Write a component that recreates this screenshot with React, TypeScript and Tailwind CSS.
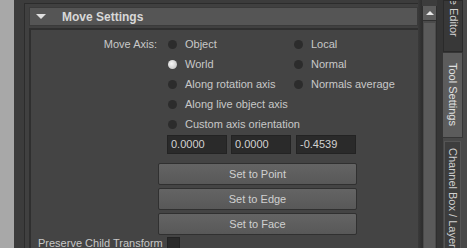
import { ReactNode } from "react";

type Option = { label: string; checked?: boolean };

const rows: { label?: string; left: Option; right?: Option }[] = [
    { label: "Move Axis:", left: { label: "Object" }, right: { label: "Local" } },
    { left: { label: "World", checked: true }, right: { label: "Normal" } },
    { left: { label: "Along rotation axis" }, right: { label: "Normals average" } },
    { left: { label: "Along live object axis" } },
    { left: { label: "Custom axis orientation" } }
];

function Radio({ label, checked }: Option) {
    return (
        <div className="flex items-center gap-[8px]">
            <span
                className={`w-[9px] h-[9px] rounded-full shrink-0 ${
                    checked ? "bg-[radial-gradient(circle_at_40%_40%,#f6f6f6,#bababa)]" : "bg-[#2c2c2c]"
                }`}
            />
            <span className="whitespace-nowrap">{label}</span>
        </div>
    );
}

function Field({ value }: { value: string }) {
    return (
        <div className="w-[60px] h-[19px] bg-[#2a2a2a] border border-[#232323] flex items-center pl-[3px] text-[#d2d2d2]">
            {value}
        </div>
    );
}

function Button({ children }: { children: ReactNode }) {
    return (
        <div className="w-[199px] h-[22px] rounded-[2px] border border-[#303030] bg-[linear-gradient(#646464,#585858)] flex items-center justify-center text-[#d0d0d0]">
            {children}
        </div>
    );
}

export default function App() {
    return (
        <div className="w-[467px] h-[248px] flex overflow-hidden bg-[#3c3c3c] text-[11px] leading-none text-[#c8c8c8] font-['Liberation_Sans',Arial,sans-serif]">
            <div className="w-[14px] bg-[#a8a8a8] shrink-0" />
            <div className="w-[10px] shrink-0" />

            {/* frame */}
            <div className="w-[394px] shrink-0 mt-[3px] border-l border-t border-[#2c2c2c] bg-[#404040] pl-[4px] pt-[3px] flex flex-col">
                <div className="h-[19px] shrink-0 bg-[#555555] border border-[#3a3a3a] flex items-center">
                    <span className="ml-[6px] w-0 h-0 border-l-[5px] border-r-[5px] border-t-[5px] border-l-transparent border-r-transparent border-t-[#e0e0e0]" />
                    <span className="ml-[16px] font-bold text-[12px] text-[#d8d8d8]">Move Settings</span>
                </div>
                <div className="mt-[2px] flex-1 bg-[#444444] border-l-[2px] border-t-[2px] border-[#2f2f2f] pt-[4px]">
                    {rows.map((row, i) => (
                        <div key={i} className="flex items-center h-[20px]">
                            <span className="w-[126px] text-right">{row.label}</span>
                            <div className="w-[126px] ml-[11px]">
                                <Radio {...row.left} />
                            </div>
                            {row.right && <Radio {...row.right} />}
                        </div>
                    ))}
                    <div className="flex gap-[4px] ml-[136px] mt-[1px]">
                        <Field value="0.0000" />
                        <Field value="0.0000" />
                        <div className="ml-[1px]">
                            <Field value="-0.4539" />
                        </div>
                    </div>
                    <div className="flex flex-col gap-[3px] ml-[127px] mt-[9px]">
                        <Button>Set to Point</Button>
                        <Button>Set to Edge</Button>
                        <Button>Set to Face</Button>
                    </div>
                    <div className="flex items-center mt-[2px] ml-[7px]">
                        <span className="w-[129px]">Preserve Child Transform</span>
                        <span className="w-[13px] h-[13px] bg-[#2a2a2a] border border-[#232323]" />
                    </div>
                </div>
            </div>

            {/* scrollbar */}
            <div className="w-[4px] shrink-0 bg-[linear-gradient(90deg,#3a3a3a,#2e2e2e)]" />
            <div className="w-[15px] shrink-0 mt-[6px] flex flex-col bg-[#4a4a4a] border-x border-[#2e2e2e]">
                <div className="h-[15px] bg-[#5c5c5c] border-b border-[#2f2f2f] flex items-center justify-center">
                    <span className="w-0 h-0 border-l-[4px] border-r-[4px] border-b-[4px] border-l-transparent border-r-transparent border-b-[#e8e8e8]" />
                </div>
                <div className="flex-1 bg-[#5a5a5a] mx-[1px] mt-[2px]" />
            </div>
            <div className="w-[6px] shrink-0 bg-[#353535]" />

            {/* tabs */}
            <div className="w-[24px] shrink-0 flex flex-col bg-[#484848] text-[11px]">
                <div className="h-[52px] w-[20px] ml-[0px] shrink-0 flex flex-col items-center justify-end pb-[14px] overflow-hidden bg-[#383838] border border-[#2a2a2a] text-[#d0d0d0]">
                    <span className="[writing-mode:vertical-rl] whitespace-nowrap">Attribute Editor</span>
                </div>
                <div className="h-[86px] w-[21px] -ml-[1px] shrink-0 flex flex-col items-center pt-[10px] overflow-hidden bg-[#5c5c5c] border border-[#363636] text-[#e0e0e0]">
                    <span className="[writing-mode:vertical-rl] whitespace-nowrap">Tool Settings</span>
                </div>
                <div className="h-[112px] w-[17px] ml-[1px] mt-[3px] shrink-0 flex flex-col items-center pt-[6px] overflow-hidden bg-[#3d3d3d] border border-[#555] text-[#d0d0d0]">
                    <span className="[writing-mode:vertical-rl] whitespace-nowrap">Channel Box / Layer Editor</span>
                </div>
            </div>
        </div>
    );
}
